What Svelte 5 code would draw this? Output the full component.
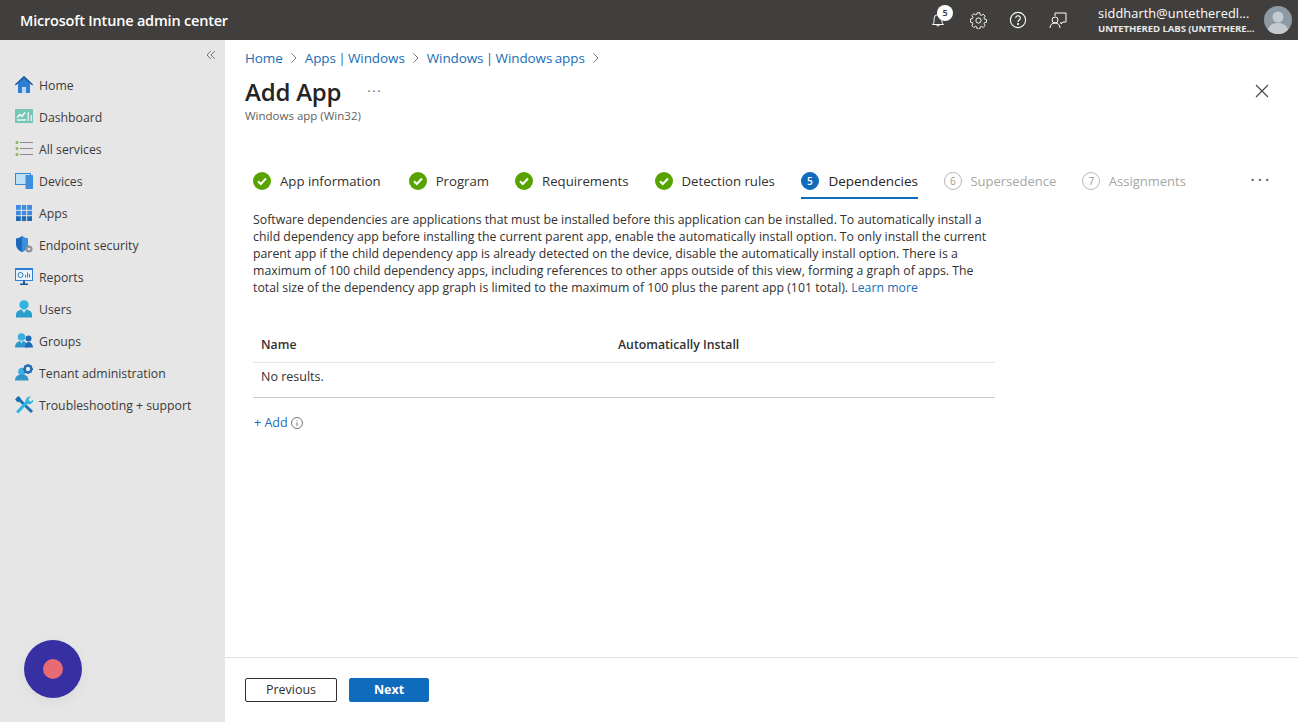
<script>
  const navItems = [
    { label: "Home", icon: "home" },
    { label: "Dashboard", icon: "dashboard" },
    { label: "All services", icon: "services" },
    { label: "Devices", icon: "devices" },
    { label: "Apps", icon: "apps" },
    { label: "Endpoint security", icon: "security" },
    { label: "Reports", icon: "reports" },
    { label: "Users", icon: "users" },
    { label: "Groups", icon: "groups" },
    { label: "Tenant administration", icon: "tenant" },
    { label: "Troubleshooting + support", icon: "tools" }
  ];

  const crumbs = ["Home", "Apps | Windows", "Windows | Windows apps"];

  const steps = [
    { label: "App information", state: "done" },
    { label: "Program", state: "done" },
    { label: "Requirements", state: "done" },
    { label: "Detection rules", state: "done" },
    { label: "Dependencies", state: "active", num: 5 },
    { label: "Supersedence", state: "todo", num: 6 },
    { label: "Assignments", state: "todo", num: 7 }
  ];
</script>

<div class="page">
  <header class="topbar">
    <div class="brand">Microsoft Intune admin center</div>
    <div class="top-icons">
      <div class="bell">
        <svg width="16" height="16" viewBox="0 0 16 16" fill="none" stroke="#fff" stroke-width="1">
          <path d="M2.5 12.5h11c-1-1-1.6-2-1.6-4V6.5a3.9 3.9 0 0 0-7.8 0v2c0 2-.6 3-1.6 4z" />
          <path d="M6.4 12.8a1.7 1.7 0 0 0 3.2 0" />
        </svg>
        <span class="bell-badge">5</span>
      </div>
      <svg class="gear" width="17" height="17" viewBox="0 0 18 18" fill="none" stroke="#fff" stroke-width="1">
        <circle cx="9" cy="9" r="2.8" />
        <path d="M7.6 .8h2.8l.4 2.2 1.4.6 1.8-1.200 2 2-1.200 1.800.6 1.400 2.200.4v2.800l-2.200.4-.6 1.400 1.200 1.800-2 2-1.800-1.200-1.400.6-.4 2.200H7.600l-.4-2.200-1.400-.6-1.800 1.200-2-2 1.200-1.800-.6-1.400-2.200-.4V7.400l2.200-.4.6-1.400-1.200-1.800 2-2 1.800 1.200 1.400-.6z" stroke-linejoin="round" />
      </svg>
      <svg width="18" height="18" viewBox="0 0 18 18" fill="none" stroke="#fff" stroke-width="1.1">
        <circle cx="9" cy="9" r="7.6" />
        <path d="M6.700 7a2.300 2.300 0 1 1 3.500 2c-.8.5-1.200 1-1.200 2" />
        <circle cx="9" cy="13" r=".5" fill="#fff" />
      </svg>
      <svg width="18" height="18" viewBox="0 0 18 18" fill="none" stroke="#fff" stroke-width="1">
        <path d="M6 5V2h11v9h-3l-2 2v-2" />
        <circle cx="6" cy="9" r="3" />
        <path d="M1 17c0-3 2-5 5-5s5 2 5 5" />
      </svg>
    </div>
    <div class="account">
      <div class="acc-name">siddharth@untetheredl...</div>
      <div class="acc-org">UNTETHERED LABS (UNTETHERE...</div>
    </div>
    <div class="avatar">
      <svg width="28" height="28" viewBox="0 0 28 28">
        <circle cx="14" cy="14" r="14" fill="#8d9aa3" />
        <circle cx="14" cy="11" r="5.500" fill="#c3cbd0" />
        <path d="M4 24c1-5 5-7 10-7s9 2 10 7a14 14 0 0 1-20 0z" fill="#c3cbd0" />
      </svg>
    </div>
  </header>

  <div class="body">
    <aside class="sidebar">
      <div class="collapse">
        <svg width="10" height="10" viewBox="0 0 10 10" fill="none" stroke="#777" stroke-width="1">
          <path d="M4.800 1 1 5l3.800 4M8.800 1 5 5l3.800 4" />
        </svg>
      </div>
      <nav>
        {#each navItems as item}
          <div class="nav-item">
            <svg class="nav-icon" width="18" height="18" viewBox="0 0 18 18">
              {#if item.icon === "home"}
                <path d="M9 0 0 8.500l.8.8L3 7.500V17h12V7.500l2.200 1.800.8-.8z" fill="#2f7fd6" />
                <path d="M9 0 0 8.500l.8.8L9 2.200l8.200 7.100.8-.8z" fill="#1c5a9e" />
                <rect x="7" y="11" width="4" height="6" fill="#bcd6f0" />
              {:else if item.icon === "dashboard"}
                <rect x="0" y="1" width="18" height="14" fill="#76c6b8" />
                <path d="M2 9.500l3-3 2 2 3-4" fill="none" stroke="#fff" stroke-width="1.300" />
                <path d="M2 12h9" stroke="#fff" stroke-width="1.300" />
                <path d="M12.500 4H14v9h-1.500zM15.500 7H17v6h-1.500z" fill="#e6e6e6" />
              {:else if item.icon === "services"}
                <path d="M5 2.500h13M5 8.500h13M5 14.500h13" stroke="#8a8a8a" stroke-width="1.100" />
                <circle cx="2" cy="2.500" r="1.500" fill="#8ab85a" />
                <circle cx="2" cy="8.500" r="1.500" fill="#8ab85a" />
                <circle cx="2" cy="14.500" r="1.500" fill="#8ab85a" />
              {:else if item.icon === "devices"}
                <rect x=".5" y="1.500" width="15" height="11" fill="#bfe0f5" stroke="#3a86d0" />
                <rect x="10.500" y="3" width="7.500" height="14" rx=".5" fill="#3f8fe0" />
              {:else if item.icon === "apps"}
                <rect x="1" y="1" width="16" height="16" fill="#3d8ade" />
                <rect x="1" y="12" width="16" height="5" fill="#1f6bb8" />
                <path d="M6.300 1v16M11.700 1v16M1 6.300h16M1 11.700h16" stroke="#e6e6e6" stroke-width="1" />
              {:else if item.icon === "security"}
                <path d="M1 2.500C3.500 2.500 5 1.500 7 0c2 1.500 3.500 2.500 6 2.500V8c0 4-2.500 6.500-6 8-3.500-1.500-6-4-6-8z" fill="#1b69b8" />
                <path d="M7 0c2 1.500 3.500 2.500 6 2.500V8c0 4-2.500 6.500-6 8z" fill="#3b8fdc" />
                <circle cx="14" cy="13" r="3.500" fill="#8c9398" />
                <circle cx="14" cy="13" r="1.300" fill="#e6e6e6" />
              {:else if item.icon === "reports"}
                <rect x=".5" y="1" width="17" height="11.500" fill="#e8f3fb" stroke="#2f7fd6" />
                <rect x="0" y="0" width="18" height="2" fill="#2f7fd6" />
                <circle cx="5.500" cy="7" r="2.500" fill="none" stroke="#3a78b8" />
                <path d="M10.500 9.500V7M12.500 9.500V4.500M14.500 9.500V6" stroke="#3a78b8" />
                <path d="M8 13h2v2.500H8zM5 15.500h8V17H5z" fill="#1c5a9e" />
              {:else if item.icon === "users"}
                <circle cx="9" cy="4.800" r="4.600" fill="#2fb5dd" />
                <path d="M1 17.500v-3c0-3 3-5 8-5s8 2 8 5v3z" fill="#2a9fcb" />
                <path d="M6.500 9.500h5L9 13z" fill="#bfeaf5" />
              {:else if item.icon === "groups"}
                <circle cx="6.500" cy="5" r="3.800" fill="#3dadde" />
                <path d="M0 15.500c0-4 2.500-6.500 6.500-6.500s6.500 2.500 6.500 6.500z" fill="#3095c8" />
                <path d="M5 9h3L6.500 11.500z" fill="#bfeaf5" />
                <circle cx="13.500" cy="6.500" r="3" fill="#1f6bb8" />
                <path d="M10 15.500c0-3 1.500-5.500 3.700-5.500S18 12.500 18 15.500z" fill="#1f6bb8" />
              {:else if item.icon === "tenant"}
                <circle cx="7" cy="7.500" r="3.800" fill="#3dadde" />
                <path d="M0 16.500c0-4 3-6 7-6s6.500 2 6.500 6z" fill="#3095c8" />
                <circle cx="13" cy="5" r="3.400" fill="none" stroke="#1f6bb8" stroke-width="2.400" />
                <path d="M13 0v1.500M13 8.500V10M8 5h1.500M16.500 5H18M9.500 1.500l1 1M15.500 7.500l1 1M9.500 8.500l1-1M15.500 2.500l1-1" stroke="#1f6bb8" stroke-width="1.600" />
              {:else if item.icon === "tools"}
                <path d="M2 1.500 17 16" stroke="#1c6fb0" stroke-width="3" />
                <path d="M0 3.500 3.500 0l3 3L3 6.500z" fill="#1c6fb0" />
                <path d="M2.200 16.500 13 5" stroke="#35b4dc" stroke-width="3.200" />
                <path d="M10.500 6.500C10 3 12.500 .2 16 .6l-2.400 2.600.8 1.800 1.800.6L18.300 3c.5 3.500-3 6.200-6 5z" fill="#35b4dc" />
              {/if}
            </svg>
            <span>{item.label}</span>
          </div>
        {/each}
      </nav>
      <div class="fab"><span class="fab-dot"></span></div>
    </aside>

    <main class="main">
      <div class="content">
        <div class="crumbs">
          {#each crumbs as crumb}
            <a href="#top">{crumb}</a>
            <svg width="8" height="10" viewBox="0 0 8 10" fill="none" stroke="#777" stroke-width="1">
              <path d="M1.500 .5 6 5l-4.500 4.500" />
            </svg>
          {/each}
        </div>
        <div class="title-row">
          <h1>Add App</h1>
          <span class="more-small">···</span>
          <svg class="close" width="14" height="14" viewBox="0 0 14 14" stroke="#444" stroke-width="1.100">
            <path d="M1 1l12 12M13 1 1 13" />
          </svg>
        </div>
        <div class="subtitle">Windows app (Win32)</div>

        <div class="wizard">
          <div class="steps">
            {#each steps as step}
              <div class="step {step.state}">
                {#if step.state === "done"}
                  <svg width="18" height="18" viewBox="0 0 18 18">
                    <circle cx="9" cy="9" r="9" fill="#57a300" />
                    <path d="M5 9.200 7.800 12 13 6.500" fill="none" stroke="#fff" stroke-width="2" />
                  </svg>
                {:else}
                  <span class="num">{step.num}</span>
                {/if}
                <span class="step-label">{step.label}</span>
              </div>
            {/each}
            <span class="more">···</span>
          </div>

          <p class="desc">
            Software dependencies are applications that must be installed before this application can be installed. To automatically install a<br />
            child dependency app before installing the current parent app, enable the automatically install option. To only install the current<br />
            parent app if the child dependency app is already detected on the device, disable the automatically install option. There is a<br />
            maximum of 100 child dependency apps, including references to other apps outside of this view, forming a graph of apps. The<br />
            total size of the dependency app graph is limited to the maximum of 100 plus the parent app (101 total). <a href="#top">Learn more</a>
          </p>

          <div class="table">
            <div class="thead">
              <span class="col-name">Name</span>
              <span>Automatically Install</span>
            </div>
            <div class="trow">No results.</div>
          </div>

          <div class="add">
            <a href="#top">+ Add</a>
            <svg width="12" height="12" viewBox="0 0 12 12" fill="none" stroke="#666" stroke-width=".9">
              <circle cx="6" cy="6" r="5.500" />
              <path d="M6 5.200V9M6 3v1" />
            </svg>
          </div>
        </div>
      </div>

      <footer class="footer">
        <button class="btn">Previous</button>
        <button class="btn primary">Next</button>
      </footer>
    </main>
  </div>
</div>

<style>
  :global(body) {
    margin: 0;
    font-family: "Open Sans", "Noto Sans", sans-serif;
    color: #323130;
    background: #fff;
  }

  .page {
    height: 722px;
    display: flex;
    flex-direction: column;
    overflow: hidden;
  }

  .topbar {
    height: 40px;
    flex-shrink: 0;
    background: #403f3d;
    color: #fff;
    display: flex;
    align-items: center;
    padding-left: 20px;
    padding-right: 6px;
  }

  .brand {
    font-size: 14.5px;
    font-weight: 600;
    letter-spacing: -0.2px;
    flex: 1;
  }

  .top-icons {
    display: flex;
    align-items: center;
    gap: 22px;
    margin-right: 31px;
  }

  .gear {
    margin: 0 0.5px;
  }

  .bell {
    position: relative;
    display: flex;
    margin-right: 1px;
  }

  .bell-badge {
    position: absolute;
    top: -7px;
    left: 7px;
    width: 16px;
    height: 16px;
    border-radius: 50%;
    background: #fff;
    color: #333;
    font-size: 9px;
    font-weight: 600;
    text-align: center;
    line-height: 16px;
  }

  .account {
    width: 166px;
    white-space: nowrap;
  }

  .acc-name {
    font-size: 12.75px;
    line-height: 17px;
    letter-spacing: 0.1px;
  }

  .acc-org {
    font-size: 9.6px;
    font-weight: 700;
    line-height: 14px;
    color: #e8e8e8;
    letter-spacing: -0.1px;
  }

  .avatar {
    display: flex;
  }

  .body {
    flex: 1;
    display: flex;
    min-height: 0;
  }

  .sidebar {
    width: 225px;
    flex-shrink: 0;
    background: #e6e6e6;
    position: relative;
  }

  .collapse {
    height: 29px;
    display: flex;
    justify-content: flex-end;
    align-items: center;
    padding-right: 9px;
    box-sizing: border-box;
  }

  .nav-item {
    height: 32px;
    display: flex;
    align-items: center;
    gap: 6px;
    padding-left: 15px;
    font-size: 12.25px;
    color: #3b3a39;
  }

  .nav-icon {
    flex-shrink: 0;
  }

  .fab {
    position: absolute;
    left: 24px;
    top: 600px;
    width: 58px;
    height: 58px;
    border-radius: 50%;
    background: #3730a3;
    display: flex;
    align-items: center;
    justify-content: center;
    box-shadow: 0 4px 14px rgba(0, 0, 0, 0.05);
  }

  .fab-dot {
    width: 20px;
    height: 20px;
    border-radius: 50%;
    background: #e86a72;
  }

  .main {
    flex: 1;
    min-width: 0;
    display: flex;
    flex-direction: column;
  }

  .content {
    flex: 1;
    padding: 8px 28px 0 20px;
  }

  .crumbs {
    height: 20px;
    display: flex;
    align-items: center;
    gap: 7px;
    font-size: 13.5px;
    word-spacing: -1px;
    letter-spacing: -0.1px;
  }

  a {
    color: #1a6db5;
    text-decoration: none;
  }

  .title-row {
    margin-top: 6px;
    height: 34px;
    display: flex;
    align-items: center;
  }

  h1 {
    margin: 0;
    font-size: 24px;
    font-weight: 600;
    color: #252423;
    letter-spacing: -0.2px;
  }

  .more-small {
    margin-left: 26px;
    font-size: 13px;
    color: #666;
    letter-spacing: 1.5px;
  }

  .close {
    margin-left: auto;
    margin-right: 1px;
  }

  .subtitle {
    font-size: 11.5px;
    color: #605e5c;
    line-height: 14px;
    margin-top: 1px;
  }

  .wizard {
    padding-left: 8px;
    margin-top: 41px;
  }

  .steps {
    height: 35px;
    display: flex;
    align-items: flex-start;
    gap: 26px;
    position: relative;
  }

  .step {
    height: 35px;
    box-sizing: border-box;
    display: flex;
    align-items: flex-start;
    gap: 9px;
    font-size: 13.2px;
    white-space: nowrap;
    padding-top: 8px;
  }

  .step:first-child {
    margin-right: 2px;
  }

  .step-label {
    line-height: 18px;
  }

  .step.active {
    border-bottom: 2px solid #0f6cbd;
    color: #252423;
    font-size: 13.5px;
    gap: 9.5px;
  }

  .step.todo {
    color: #a6a6a6;
    font-size: 13px;
    gap: 8.5px;
  }

  .num {
    width: 18px;
    height: 18px;
    box-sizing: border-box;
    border-radius: 50%;
    font-size: 10px;
    line-height: 16px;
    text-align: center;
    border: 1px solid #b8b8b8;
    color: #999;
  }

  .active .num {
    background: #0f6cbd;
    border-color: #0f6cbd;
    color: #fff;
    font-weight: 600;
  }

  .more {
    position: absolute;
    right: -2px;
    top: 3px;
    font-size: 18px;
    color: #555;
    letter-spacing: 2.5px;
  }

  .desc {
    margin: 12px 0 0;
    font-size: 12.3px;
    line-height: 17px;
    white-space: nowrap;
    color: #323130;
  }

  .table {
    width: 742px;
    margin-top: 32px;
    font-size: 12.5px;
    border-bottom: 1px solid #c8c8c8;
  }

  .thead {
    height: 35px;
    display: flex;
    align-items: center;
    font-weight: 600;
    font-size: 12.25px;
    padding-left: 8px;
    padding-bottom: 1px;
    box-sizing: border-box;
    border-bottom: 1px solid #e6e6e6;
  }

  .col-name {
    width: 357px;
  }

  .trow {
    height: 34px;
    display: flex;
    align-items: center;
    padding-left: 8px;
    padding-bottom: 8px;
    box-sizing: border-box;
  }

  .add {
    margin-top: 16px;
    display: flex;
    align-items: center;
    gap: 3px;
    font-size: 12.5px;
    padding-left: 1px;
  }

  .footer {
    height: 65px;
    flex-shrink: 0;
    box-sizing: border-box;
    border-top: 1px solid #e0e0e0;
    display: flex;
    gap: 12px;
    padding: 20px 0 0 20px;
  }

  .btn {
    height: 24px;
    width: 92px;
    box-sizing: border-box;
    padding: 0 0 1px;
    border: 1px solid #323130;
    border-radius: 2px;
    background: #fff;
    color: #323130;
    font-family: inherit;
    font-size: 12.5px;
  }

  .btn.primary {
    width: 80px;
    background: #0f6cbd;
    border-color: #0f6cbd;
    color: #fff;
    font-weight: 700;
  }
</style>
